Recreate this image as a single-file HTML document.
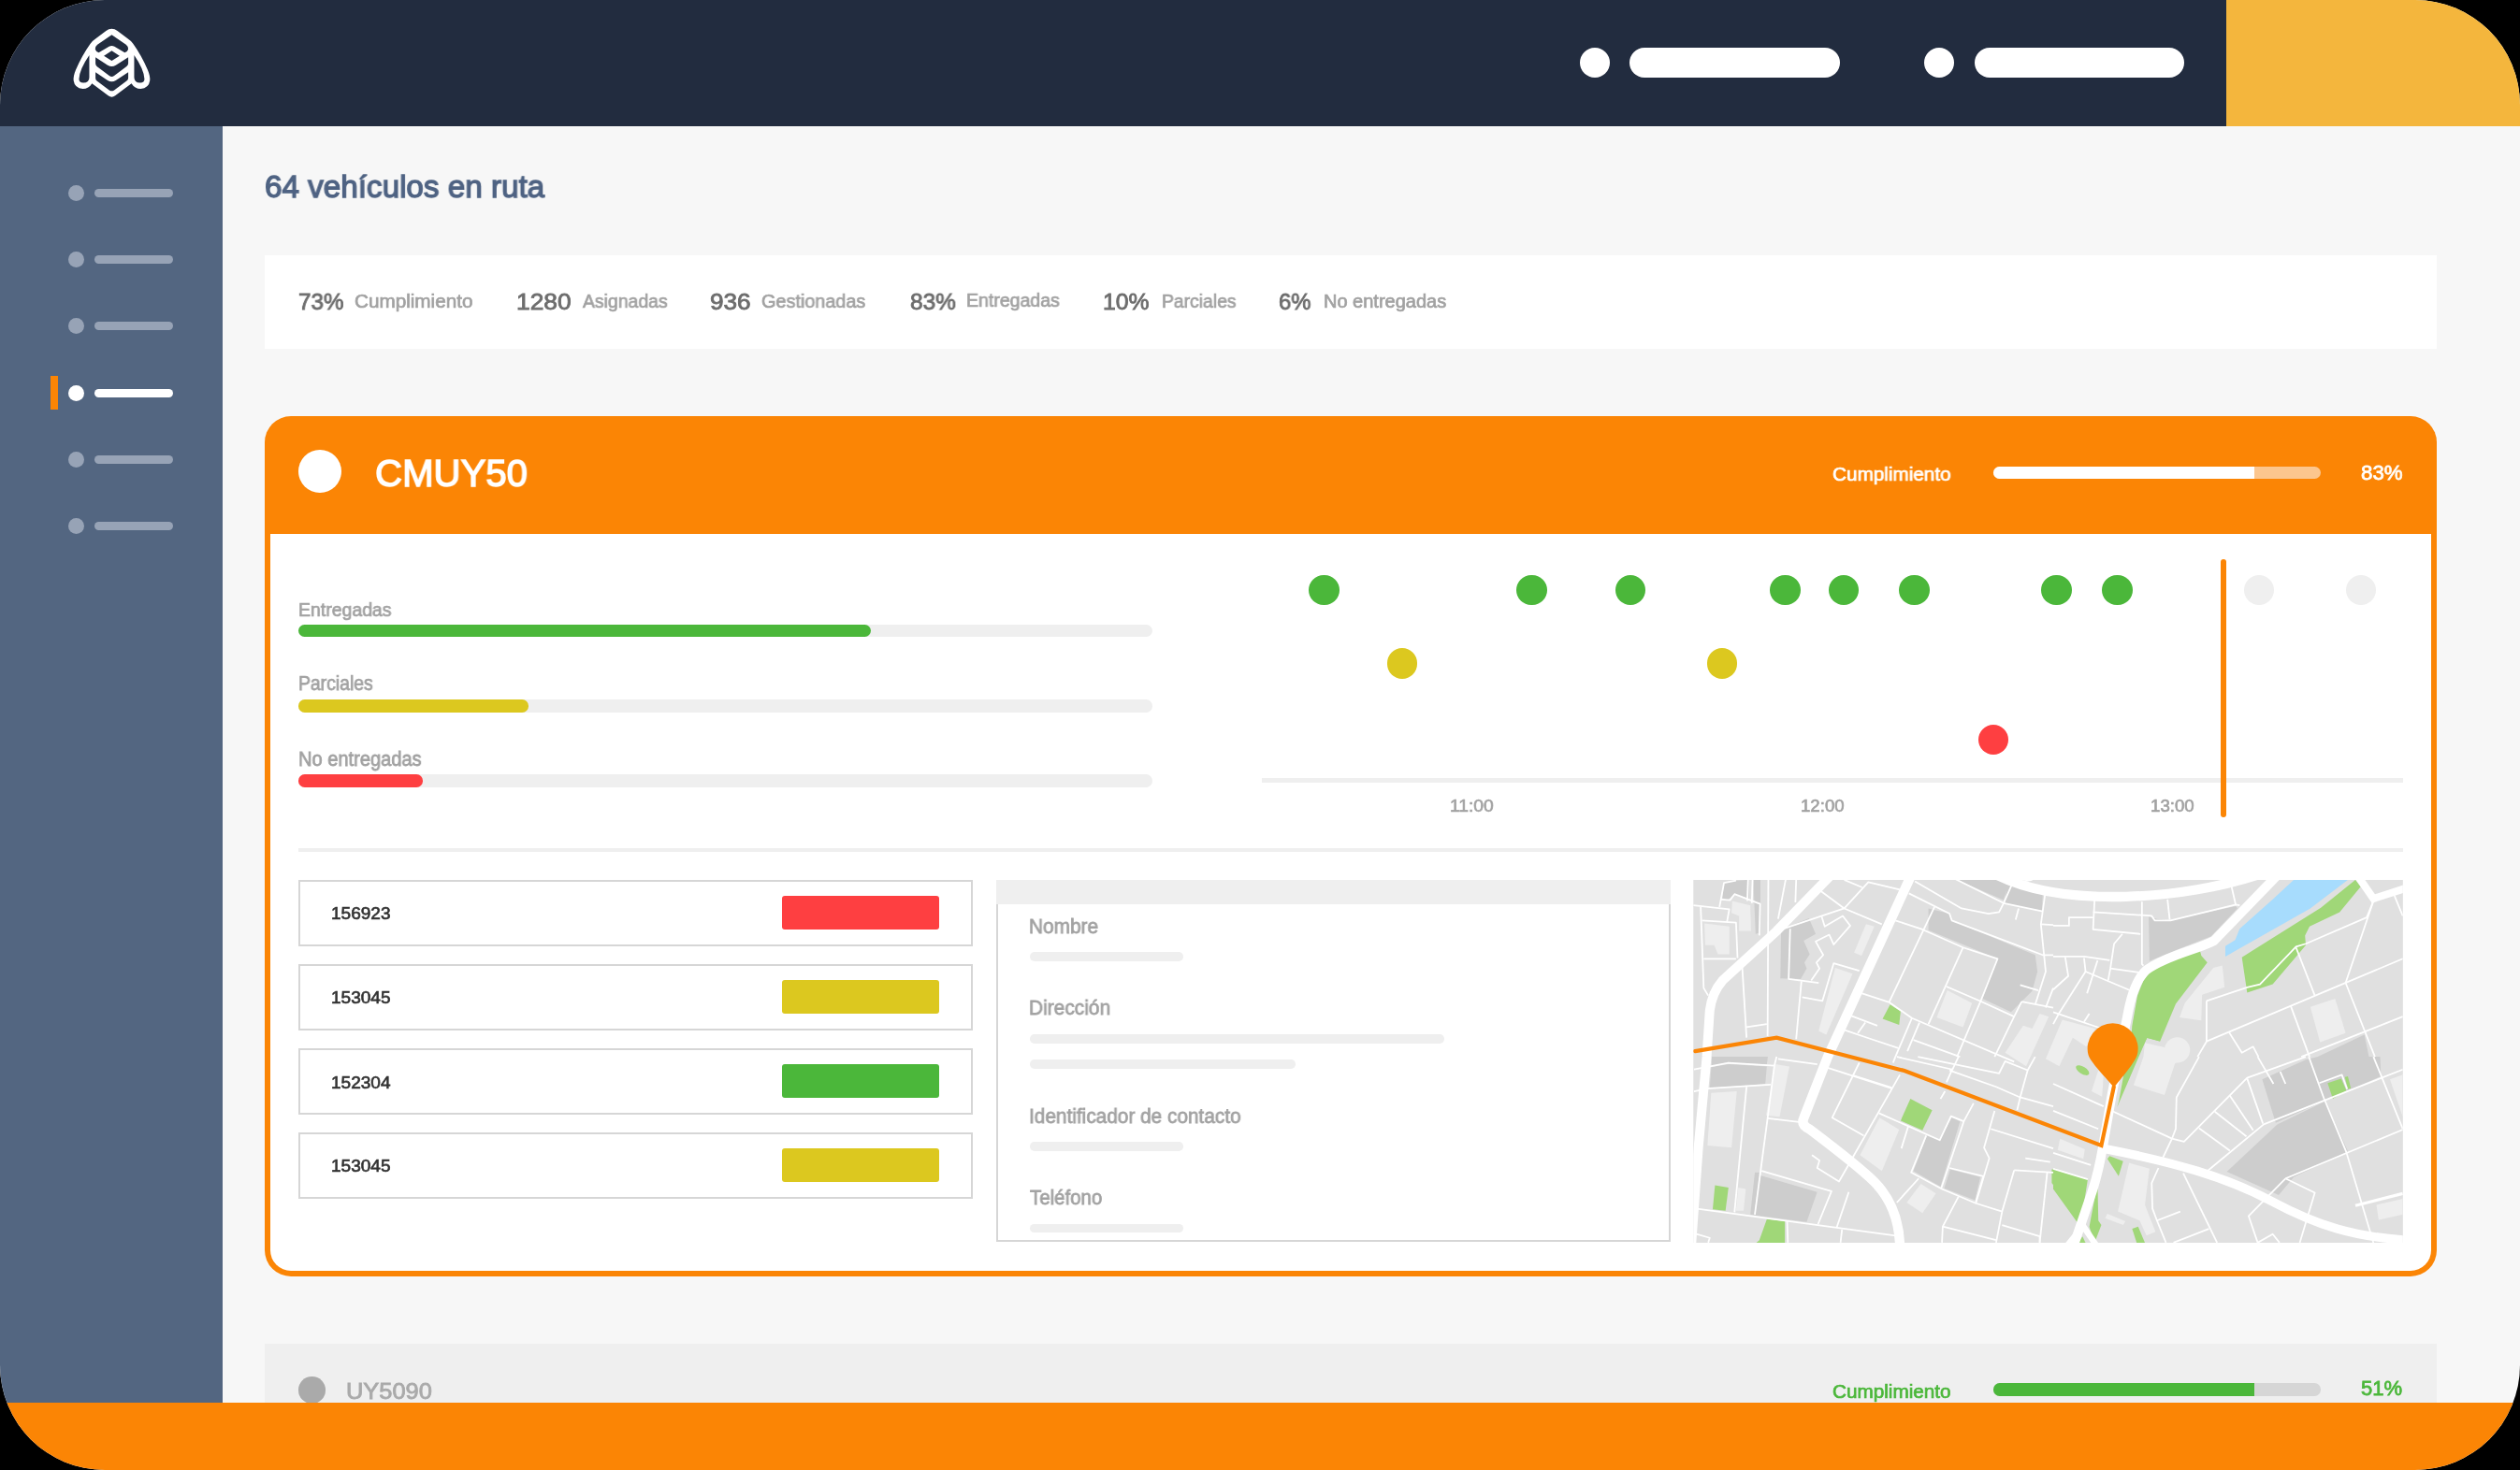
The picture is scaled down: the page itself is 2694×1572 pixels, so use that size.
<!DOCTYPE html>
<html><head><meta charset="utf-8"><style>
html,body{margin:0;padding:0;}
body{width:2694px;height:1572px;background:#000;overflow:hidden;position:relative;}
#f{position:absolute;left:0;top:0;width:2694px;height:1572px;border-radius:112px;overflow:hidden;background:#f7f7f7;}
.b{position:absolute;}
.t{position:absolute;white-space:nowrap;line-height:1;font-family:"Liberation Sans",sans-serif;transform-origin:0 0;will-change:transform;}
svg{position:absolute;}
</style></head><body><div id="f">
<div class="b" style="left:0.00px;top:0.00px;width:2380.00px;height:135.00px;background:#222c3f;"></div>
<div class="b" style="left:2380.00px;top:0.00px;width:314.00px;height:135.00px;background:#f4b63d;"></div>
<div class="b" style="left:1688.50px;top:51.00px;width:32.00px;height:32.00px;background:#fff;border-radius:50%;"></div>
<div class="b" style="left:1742.40px;top:51.00px;width:224.90px;height:32.00px;background:#fff;border-radius:16.00px;"></div>
<div class="b" style="left:2056.50px;top:51.00px;width:32.00px;height:32.00px;background:#fff;border-radius:50%;"></div>
<div class="b" style="left:2111.00px;top:51.00px;width:224.40px;height:32.00px;background:#fff;border-radius:16.00px;"></div>
<svg style="left:70px;top:25px" width="100" height="85.02" viewBox="0 0 1729 1470"><path fill="#fff" fill-rule="evenodd" d="
M855,100 Q800,100 750,140 L560,280 Q500,320 460,375 Q300,600 190,860 Q140,980 150,1060 Q170,1200 320,1210 Q430,1210 490,1110 L790,1335 Q855,1385 920,1335 L1220,1110 Q1280,1210 1390,1210 Q1540,1200 1560,1060 Q1570,980 1520,860 Q1410,600 1250,375 Q1210,320 1150,280 L960,140 Q910,100 855,100 Z
M855,210 L1120,395 Q1165,430 1160,480 Q1150,520 1095,540 L905,430 Q855,400 805,430 L615,540 Q560,520 550,480 Q545,430 590,395 Z
M855,505 L1000,600 L855,690 L710,600 Z
M555,625 L780,775 Q855,820 930,775 L1160,625 L1160,740 Q1160,775 1130,795 L900,970 Q855,1000 810,970 L580,795 Q555,775 555,740 Z
M555,905 L780,1055 Q855,1100 930,1055 L1160,905 L1160,1010 Q1160,1045 1130,1065 L900,1235 Q855,1265 810,1235 L580,1065 Q555,1045 555,1010 Z
M440,590 L440,1000 Q440,1100 330,1100 Q250,1100 250,1030 Q260,850 440,590 Z
M1270,590 L1270,1000 Q1270,1100 1380,1100 Q1460,1100 1460,1030 Q1450,850 1270,590 Z"/></svg>

<div class="b" style="left:0.00px;top:135.00px;width:238.00px;height:1365.00px;background:#536681;"></div>
<div class="b" style="left:73.20px;top:197.50px;width:17.00px;height:17.00px;background:#97a3b6;border-radius:50%;"></div>
<div class="b" style="left:101.00px;top:201.50px;width:83.50px;height:9.00px;background:#97a3b6;border-radius:4.50px;"></div>
<div class="b" style="left:73.20px;top:268.50px;width:17.00px;height:17.00px;background:#97a3b6;border-radius:50%;"></div>
<div class="b" style="left:101.00px;top:272.50px;width:83.50px;height:9.00px;background:#97a3b6;border-radius:4.50px;"></div>
<div class="b" style="left:73.20px;top:340.10px;width:17.00px;height:17.00px;background:#97a3b6;border-radius:50%;"></div>
<div class="b" style="left:101.00px;top:344.10px;width:83.50px;height:9.00px;background:#97a3b6;border-radius:4.50px;"></div>
<div class="b" style="left:73.20px;top:411.50px;width:17.00px;height:17.00px;background:#fff;border-radius:50%;"></div>
<div class="b" style="left:101.00px;top:415.50px;width:83.50px;height:9.00px;background:#fff;border-radius:4.50px;"></div>
<div class="b" style="left:73.20px;top:482.70px;width:17.00px;height:17.00px;background:#97a3b6;border-radius:50%;"></div>
<div class="b" style="left:101.00px;top:486.70px;width:83.50px;height:9.00px;background:#97a3b6;border-radius:4.50px;"></div>
<div class="b" style="left:73.20px;top:554.00px;width:17.00px;height:17.00px;background:#97a3b6;border-radius:50%;"></div>
<div class="b" style="left:101.00px;top:558.00px;width:83.50px;height:9.00px;background:#97a3b6;border-radius:4.50px;"></div>
<div class="b" style="left:53.80px;top:402.20px;width:8.50px;height:35.70px;background:#fb8505;"></div>
<div class="t" style="left:283.40px;top:183.44px;font-size:33.65px;font-weight:normal;color:#4f6383;-webkit-text-stroke:1.35px #4f6383;transform:scaleX(0.9875);">64 vehículos en ruta</div>
<div class="b" style="left:283.00px;top:272.60px;width:2322.40px;height:100.80px;background:#fff;"></div>
<div class="t" style="left:319.21px;top:311.11px;font-size:24.76px;font-weight:normal;color:#6d6d6d;-webkit-text-stroke:0.87px #6d6d6d;transform:scaleX(0.9796);">73%</div>
<div class="t" style="left:379.13px;top:312.02px;font-size:20.00px;font-weight:normal;color:#a2a2a2;-webkit-text-stroke:0.70px #a2a2a2;transform:scaleX(1.0339);">Cumplimiento</div>
<div class="t" style="left:552.19px;top:311.11px;font-size:24.76px;font-weight:normal;color:#6d6d6d;-webkit-text-stroke:0.87px #6d6d6d;transform:scaleX(1.0631);">1280</div>
<div class="t" style="left:622.64px;top:312.02px;font-size:20.00px;font-weight:normal;color:#a2a2a2;-webkit-text-stroke:0.70px #a2a2a2;transform:scaleX(0.9700);">Asignadas</div>
<div class="t" style="left:759.28px;top:311.11px;font-size:24.76px;font-weight:normal;color:#6d6d6d;-webkit-text-stroke:0.87px #6d6d6d;transform:scaleX(1.0578);">936</div>
<div class="t" style="left:813.66px;top:312.02px;font-size:20.00px;font-weight:normal;color:#a2a2a2;-webkit-text-stroke:0.70px #a2a2a2;transform:scaleX(0.9910);">Gestionadas</div>
<div class="t" style="left:972.58px;top:311.11px;font-size:24.76px;font-weight:normal;color:#6d6d6d;-webkit-text-stroke:0.87px #6d6d6d;transform:scaleX(0.9864);">83%</div>
<div class="t" style="left:1032.53px;top:311.32px;font-size:20.00px;font-weight:normal;color:#a2a2a2;-webkit-text-stroke:0.70px #a2a2a2;transform:scaleX(0.9757);">Entregadas</div>
<div class="t" style="left:1179.09px;top:311.11px;font-size:24.76px;font-weight:normal;color:#6d6d6d;-webkit-text-stroke:0.87px #6d6d6d;transform:scaleX(0.9913);">10%</div>
<div class="t" style="left:1241.79px;top:312.02px;font-size:20.00px;font-weight:normal;color:#a2a2a2;-webkit-text-stroke:0.70px #a2a2a2;transform:scaleX(0.9665);">Parciales</div>
<div class="t" style="left:1367.48px;top:311.11px;font-size:24.76px;font-weight:normal;color:#6d6d6d;-webkit-text-stroke:0.87px #6d6d6d;transform:scaleX(0.9626);">6%</div>
<div class="t" style="left:1415.00px;top:312.02px;font-size:20.00px;font-weight:normal;color:#a2a2a2;-webkit-text-stroke:0.70px #a2a2a2;transform:scaleX(0.9992);">No entregadas</div>
<div class="b" style="left:283.00px;top:445.30px;width:2322.00px;height:919.40px;background:#fb8505;border-radius:28px;"></div>
<div class="b" style="left:289.20px;top:571.20px;width:2310.00px;height:787.60px;background:#fff;border-radius:0 0 22px 22px;"></div>
<div class="b" style="left:319.10px;top:481.40px;width:46.00px;height:46.00px;background:#fff;border-radius:50%;"></div>
<div class="t" style="left:400.69px;top:485.50px;font-size:41.38px;font-weight:normal;color:#fff;-webkit-text-stroke:1.45px #fff;transform:scaleX(0.9715);">CMUY50</div>
<div class="t" style="left:1959.23px;top:497.20px;font-size:20.83px;font-weight:normal;color:#fff;-webkit-text-stroke:0.73px #fff;transform:scaleX(0.9944);">Cumplimiento</div>
<div class="b" style="left:2131.00px;top:498.70px;width:350.30px;height:13.50px;background:#fcc68e;border-radius:6.75px;"></div>
<div class="b" style="left:2131.00px;top:498.70px;width:278.80px;height:13.50px;background:#fff;border-radius:6.75px 0 0 6.75px;"></div>
<div class="t" style="left:2523.89px;top:495.12px;font-size:22.31px;font-weight:normal;color:#fff;-webkit-text-stroke:0.78px #fff;transform:scaleX(0.9972);">83%</div>
<div class="t" style="left:318.78px;top:640.97px;font-size:21.10px;font-weight:normal;color:#a2a2a2;-webkit-text-stroke:0.74px #a2a2a2;transform:scaleX(0.9223);">Entregadas</div>
<div class="b" style="left:319.00px;top:667.80px;width:913.00px;height:13.50px;background:#efefef;border-radius:6.75px;"></div>
<div class="b" style="left:319.00px;top:667.80px;width:612.00px;height:13.50px;background:#4bb73a;border-radius:6.75px;"></div>
<div class="t" style="left:318.79px;top:721.41px;font-size:21.52px;font-weight:normal;color:#a2a2a2;-webkit-text-stroke:0.75px #a2a2a2;transform:scaleX(0.9007);">Parciales</div>
<div class="b" style="left:319.00px;top:748.00px;width:913.00px;height:13.50px;background:#efefef;border-radius:6.75px;"></div>
<div class="b" style="left:319.00px;top:748.00px;width:246.00px;height:13.50px;background:#dcc81f;border-radius:6.75px;"></div>
<div class="t" style="left:318.75px;top:800.77px;font-size:22.48px;font-weight:normal;color:#a2a2a2;-webkit-text-stroke:0.79px #a2a2a2;transform:scaleX(0.8923);">No entregadas</div>
<div class="b" style="left:319.00px;top:828.00px;width:913.00px;height:13.50px;background:#efefef;border-radius:6.75px;"></div>
<div class="b" style="left:319.00px;top:828.00px;width:132.50px;height:13.50px;background:#fe3f41;border-radius:6.75px;"></div>
<div class="b" style="left:1349.20px;top:832.20px;width:1219.60px;height:4.60px;background:#efefef;"></div>
<div class="t" style="left:1550.29px;top:853.25px;font-size:18.23px;font-weight:normal;color:#a2a2a2;-webkit-text-stroke:0.64px #a2a2a2;transform:scaleX(1.0573);">11:00</div>
<div class="t" style="left:1924.53px;top:853.25px;font-size:18.23px;font-weight:normal;color:#a2a2a2;-webkit-text-stroke:0.64px #a2a2a2;transform:scaleX(1.0224);">12:00</div>
<div class="t" style="left:2298.63px;top:853.25px;font-size:18.23px;font-weight:normal;color:#a2a2a2;-webkit-text-stroke:0.64px #a2a2a2;transform:scaleX(1.0246);">13:00</div>
<div class="b" style="left:1399.05px;top:614.75px;width:32.50px;height:32.50px;background:#4bb73a;border-radius:50%;"></div>
<div class="b" style="left:1621.25px;top:614.75px;width:32.50px;height:32.50px;background:#4bb73a;border-radius:50%;"></div>
<div class="b" style="left:1726.75px;top:614.75px;width:32.50px;height:32.50px;background:#4bb73a;border-radius:50%;"></div>
<div class="b" style="left:1892.35px;top:614.75px;width:32.50px;height:32.50px;background:#4bb73a;border-radius:50%;"></div>
<div class="b" style="left:1954.55px;top:614.75px;width:32.50px;height:32.50px;background:#4bb73a;border-radius:50%;"></div>
<div class="b" style="left:2030.45px;top:614.75px;width:32.50px;height:32.50px;background:#4bb73a;border-radius:50%;"></div>
<div class="b" style="left:2182.05px;top:614.75px;width:32.50px;height:32.50px;background:#4bb73a;border-radius:50%;"></div>
<div class="b" style="left:2247.25px;top:614.75px;width:32.50px;height:32.50px;background:#4bb73a;border-radius:50%;"></div>
<div class="b" style="left:1482.95px;top:693.45px;width:32.50px;height:32.50px;background:#dcc81f;border-radius:50%;"></div>
<div class="b" style="left:1824.55px;top:693.45px;width:32.50px;height:32.50px;background:#dcc81f;border-radius:50%;"></div>
<div class="b" style="left:2114.55px;top:774.75px;width:32.50px;height:32.50px;background:#fe3f41;border-radius:50%;"></div>
<div class="b" style="left:2398.95px;top:614.75px;width:32.50px;height:32.50px;background:#efefef;border-radius:50%;"></div>
<div class="b" style="left:2507.55px;top:614.75px;width:32.50px;height:32.50px;background:#efefef;border-radius:50%;"></div>
<div class="b" style="left:2373.50px;top:598.00px;width:6.60px;height:276.00px;background:#fb8505;border-radius:138.00px;"></div>
<div class="b" style="left:319.00px;top:907.00px;width:2250.00px;height:4.30px;background:#efefef;"></div>
<div class="b" style="left:319.00px;top:940.80px;width:720.70px;height:71.40px;background:#fff;box-sizing:border-box;border:2px solid #d6d6d6;"></div>
<div class="b" style="left:835.90px;top:958.30px;width:168.20px;height:35.80px;background:#fe3f41;border-radius:3px;"></div>
<div class="t" style="left:354.11px;top:967.14px;font-size:19.05px;font-weight:normal;color:#333;-webkit-text-stroke:0.67px #333;transform:scaleX(0.9984);">156923</div>
<div class="b" style="left:319.00px;top:1030.60px;width:720.70px;height:71.40px;background:#fff;box-sizing:border-box;border:2px solid #d6d6d6;"></div>
<div class="b" style="left:835.90px;top:1048.10px;width:168.20px;height:35.80px;background:#dcc81f;border-radius:3px;"></div>
<div class="t" style="left:354.11px;top:1056.74px;font-size:19.05px;font-weight:normal;color:#333;-webkit-text-stroke:0.67px #333;transform:scaleX(0.9984);">153045</div>
<div class="b" style="left:319.00px;top:1120.50px;width:720.70px;height:71.40px;background:#fff;box-sizing:border-box;border:2px solid #d6d6d6;"></div>
<div class="b" style="left:835.90px;top:1138.00px;width:168.20px;height:35.80px;background:#4bb73a;border-radius:3px;"></div>
<div class="t" style="left:354.11px;top:1147.54px;font-size:19.05px;font-weight:normal;color:#333;-webkit-text-stroke:0.67px #333;transform:scaleX(0.9953);">152304</div>
<div class="b" style="left:319.00px;top:1210.60px;width:720.70px;height:71.40px;background:#fff;box-sizing:border-box;border:2px solid #d6d6d6;"></div>
<div class="b" style="left:835.90px;top:1228.10px;width:168.20px;height:35.80px;background:#dcc81f;border-radius:3px;"></div>
<div class="t" style="left:354.11px;top:1236.74px;font-size:19.05px;font-weight:normal;color:#333;-webkit-text-stroke:0.67px #333;transform:scaleX(0.9984);">153045</div>
<div class="b" style="left:1065.20px;top:940.50px;width:720.50px;height:387.50px;background:#fff;box-sizing:border-box;border:2px solid #d6d6d6;"></div>
<div class="b" style="left:1065.20px;top:940.50px;width:720.50px;height:26.20px;background:#efefef;"></div>
<div class="t" style="left:1099.90px;top:980.07px;font-size:21.79px;font-weight:normal;color:#a2a2a2;-webkit-text-stroke:0.76px #a2a2a2;transform:scaleX(0.9574);">Nombre</div>
<div class="t" style="left:1099.89px;top:1066.67px;font-size:21.79px;font-weight:normal;color:#a2a2a2;-webkit-text-stroke:0.76px #a2a2a2;transform:scaleX(0.9596);">Dirección</div>
<div class="t" style="left:1099.69px;top:1183.27px;font-size:21.79px;font-weight:normal;color:#a2a2a2;-webkit-text-stroke:0.76px #a2a2a2;transform:scaleX(0.9547);">Identificador de contacto</div>
<div class="t" style="left:1101.15px;top:1269.67px;font-size:21.79px;font-weight:normal;color:#a2a2a2;-webkit-text-stroke:0.76px #a2a2a2;transform:scaleX(0.9385);">Teléfono</div>
<div class="b" style="left:1101.20px;top:1018.20px;width:163.40px;height:9.80px;background:#efefef;border-radius:4.90px;"></div>
<div class="b" style="left:1101.20px;top:1106.00px;width:443.10px;height:9.50px;background:#efefef;border-radius:4.75px;"></div>
<div class="b" style="left:1101.20px;top:1133.40px;width:283.90px;height:9.60px;background:#efefef;border-radius:4.80px;"></div>
<div class="b" style="left:1101.20px;top:1221.20px;width:163.40px;height:9.50px;background:#efefef;border-radius:4.75px;"></div>
<div class="b" style="left:1101.20px;top:1308.70px;width:163.40px;height:9.50px;background:#efefef;border-radius:4.75px;"></div>
<svg style="left:1790px;top:920px" width="810" height="420" viewBox="0 0 5040 2613"><defs><clipPath id="mc"><rect x="126" y="130" width="4720" height="2414"/></clipPath></defs><g clip-path="url(#mc)"><rect x="0" y="0" width="5040" height="2613" fill="#e0e0e0"/><polygon points="200,420 365,440 365,625 290,625 265,565 205,565" fill="#eeeeee"/><polygon points="385,270 505,300 510,470 430,470 430,370 380,350" fill="#eeeeee"/><polygon points="1195,615 1275,425 1330,440 1245,635" fill="#eeeeee"/><polygon points="960,1135 1070,715 1185,755 1010,1160" fill="#eeeeee"/><polygon points="1745,1045 1815,865 1980,950 1920,1110" fill="#eeeeee"/><polygon points="3360,1045 3395,950 3585,715 3645,700 3660,845 3510,895 3505,1065" fill="#eeeeee"/><polygon points="4230,975 4395,920 4465,1150 4295,1210" fill="#eeeeee"/><polygon points="3055,1497 3120,1307 3400,1307 3330,1352 3260,1562" fill="#eeeeee"/><polygon points="3130,1215 3260,1245 3280,1307 3120,1307" fill="#eeeeee"/><polygon points="2775,1537 2820,1397 2855,1417 2845,1572" fill="#eeeeee"/><polygon points="2550,1927 2565,1852 2730,1922 2720,1987" fill="#eeeeee"/><polygon points="2950,2337 3025,2012 3160,2052 3130,2292 3200,2472 3140,2497 3095,2397" fill="#eeeeee"/><polygon points="2865,2382 2880,2352 3000,2402 2985,2427" fill="#eeeeee"/><polygon points="4670,2292 4845,2252 4845,2357 4685,2392" fill="#eeeeee"/><polygon points="4760,1457 4845,1427 4845,1707" fill="#eeeeee"/><polygon points="2200,1280 2320,1100 2380,1120 2430,1020 2490,1040 2340,1370" fill="#eeeeee"/><polygon points="2470,1320 2580,1060 2800,1120 2740,1240 2650,1180 2560,1370" fill="#eeeeee"/><polygon points="220,1897 245,1547 415,1537 380,1912" fill="#eeeeee"/><polygon points="610,1697 670,1357 765,1372 700,1707" fill="#eeeeee"/><polygon points="1235,1962 1365,1712 1495,1792 1380,2067" fill="#eeeeee"/><polygon points="1545,2277 1640,2152 1740,2217 1650,2347" fill="#eeeeee"/><polygon points="410,2332 425,2177 475,2187 460,2332" fill="#eeeeee"/><circle cx="3345" cy="1262" r="85" fill="#eeeeee"/><polygon points="330,150 410,135 495,130 495,255 400,225 355,262 320,252" fill="#cdcdcd"/><polygon points="525,130 572,130 572,480 540,490" fill="#cdcdcd"/><polygon points="710,460 895,385 940,490 860,535 900,625 865,680 880,720 840,790 705,785" fill="#cdcdcd"/><polygon points="1690,320 1830,355 1845,400 2400,630 2415,740 2380,870 2240,1010 2050,920 2150,655 1690,465" fill="#cdcdcd"/><polygon points="1880,130 2230,130 2190,265" fill="#cdcdcd"/><polygon points="2210,165 2450,220 2445,335 2200,290" fill="#cdcdcd"/><polygon points="3155,375 3210,390 3300,400 3735,305 3745,320 3570,505 3380,580 3160,670" fill="#cdcdcd"/><polygon points="250,1307 620,1307 615,1357 360,1347 250,1367" fill="#cdcdcd"/><polygon points="250,1307 620,1307 615,1357 360,1347 250,1367" fill="#cdcdcd"/><polygon points="245,1377 360,1357 615,1372 605,1487 235,1517" fill="#cdcdcd"/><polygon points="540,2087 950,2207 880,2407 540,2362" fill="#cdcdcd"/><polygon points="505,2357 535,2077 565,2077 545,2362" fill="#cdcdcd"/><polygon points="1590,2067 1680,1832 1765,1862 1845,1712 1900,1737 1770,2172" fill="#cdcdcd"/><polygon points="1795,2182 1835,2057 2035,2107 2000,2262" fill="#cdcdcd"/><polygon points="3910,1457 4200,1327 4280,1307 4695,1307 4700,1437 4330,1597 4000,1747" fill="#cdcdcd"/><polygon points="4280,1307 4590,1160 4620,1307" fill="#cdcdcd"/><polygon points="3675,2072 4010,1757 4330,1602 4480,1937 4120,2107 4020,2227" fill="#cdcdcd"/><polygon points="1385,1055 1435,960 1505,1005 1495,1095" fill="#a0d778"/><polygon points="4530,130 4565,175 4425,345 4225,440 4195,500 4200,565 3980,825 3810,880 3775,645 4300,315" fill="#a0d778"/><polygon points="3495,595 3505,635 3545,680 3335,955 3230,1205 3145,1180 3080,1307 3040,1307 3045,1100 3080,900 3120,800 3180,720 3320,660" fill="#a0d778"/><polygon points="2520,2057 2750,2122 2700,2437 2520,2187" fill="#a0d778"/><polygon points="2880,1987 2895,1967 2985,2002 2955,2102" fill="#a0d778"/><polygon points="2815,2147 2820,2397 2840,2427 2795,2544 2760,2437" fill="#a0d778"/><polygon points="2685,2544 2715,2502 2735,2544" fill="#a0d778"/><polygon points="3045,2452 3085,2437 3130,2544 3075,2544" fill="#a0d778"/><polygon points="4345,1482 4435,1452 4470,1532 4380,1587" fill="#a0d778"/><polygon points="4460,1442 4480,1437 4500,1517 4480,1522" fill="#a0d778"/><polygon points="255,2322 270,2162 360,2177 340,2332" fill="#a0d778"/><polygon points="545,2544 565,2527 615,2387 735,2402 735,2544" fill="#a0d778"/><polygon points="1505,1732 1570,1587 1715,1662 1650,1797" fill="#a0d778"/><polygon points="2510,2057 2540,2052 2540,2187 2510,2147" fill="#a0d778"/><polygon points="3067,996 3298,996 3228,1203 3143,1182 2945,1642 2957,1600" fill="#a0d778"/><ellipse cx="2715" cy="1397" rx="50" ry="24" transform="rotate(32 2715 1397)" fill="#a0d778"/><polygon points="4120,130 4480,130 4230,320 3665,640 3665,570 3730,530 3760,455 3980,260" fill="#a7dcfd"/><polyline points="126,300 365,325 350,410" fill="none" stroke="#fff" stroke-width="11" stroke-linejoin="round"/><polyline points="175,310 195,850 225,900" fill="none" stroke="#fff" stroke-width="11" stroke-linejoin="round"/><polyline points="185,400 410,415 420,650" fill="none" stroke="#fff" stroke-width="11" stroke-linejoin="round"/><polyline points="195,655 410,655" fill="none" stroke="#fff" stroke-width="11" stroke-linejoin="round"/><polyline points="300,310 330,150 410,135" fill="none" stroke="#fff" stroke-width="11" stroke-linejoin="round"/><polyline points="310,260 370,265 400,225 570,290 565,500" fill="none" stroke="#fff" stroke-width="11" stroke-linejoin="round"/><polyline points="490,130 485,270" fill="none" stroke="#fff" stroke-width="11" stroke-linejoin="round"/><polyline points="520,130 515,285" fill="none" stroke="#fff" stroke-width="11" stroke-linejoin="round"/><polyline points="625,130 620,1170" fill="none" stroke="#fff" stroke-width="11" stroke-linejoin="round"/><polyline points="740,130 690,390" fill="none" stroke="#fff" stroke-width="11" stroke-linejoin="round"/><polyline points="810,130 805,280" fill="none" stroke="#fff" stroke-width="11" stroke-linejoin="round"/><polyline points="450,690 480,1180" fill="none" stroke="#fff" stroke-width="11" stroke-linejoin="round"/><polyline points="480,1110 615,1090" fill="none" stroke="#fff" stroke-width="11" stroke-linejoin="round"/><polyline points="680,470 1130,320" fill="none" stroke="#fff" stroke-width="11" stroke-linejoin="round"/><polyline points="975,205 1130,320 1380,425" fill="none" stroke="#fff" stroke-width="11" stroke-linejoin="round"/><polyline points="1130,320 1290,145 1500,195" fill="none" stroke="#fff" stroke-width="11" stroke-linejoin="round"/><polyline points="1130,130 1250,180" fill="none" stroke="#fff" stroke-width="11" stroke-linejoin="round"/><polyline points="770,455 760,790 960,815" fill="none" stroke="#fff" stroke-width="11" stroke-linejoin="round"/><polyline points="845,805 810,1190" fill="none" stroke="#fff" stroke-width="11" stroke-linejoin="round"/><polyline points="850,910 985,935 1060,685 1230,735" fill="none" stroke="#fff" stroke-width="11" stroke-linejoin="round"/><polyline points="980,375 1000,440 1120,370 1170,435 1060,560 1030,495 940,540 990,630 945,680 965,720 910,800" fill="none" stroke="#fff" stroke-width="11" stroke-linejoin="round"/><polyline points="1600,140 1910,320 2090,355 2160,345 2190,285 2250,150" fill="none" stroke="#fff" stroke-width="11" stroke-linejoin="round"/><polyline points="1560,220 1830,355 1845,400 2450,630 2520,630" fill="none" stroke="#fff" stroke-width="11" stroke-linejoin="round"/><polyline points="1470,400 1650,460 1920,580 2150,655 2040,930 1880,1307" fill="none" stroke="#fff" stroke-width="11" stroke-linejoin="round"/><polyline points="1730,310 1430,940" fill="none" stroke="#fff" stroke-width="11" stroke-linejoin="round"/><polyline points="1230,880 1430,945 1580,1050 2260,1340" fill="none" stroke="#fff" stroke-width="11" stroke-linejoin="round"/><polyline points="1810,840 2030,935 2260,1040" fill="none" stroke="#fff" stroke-width="11" stroke-linejoin="round"/><polyline points="1920,580 1690,1090" fill="none" stroke="#fff" stroke-width="11" stroke-linejoin="round"/><polyline points="2466,224 2438,425 2470,740 2400,960" fill="none" stroke="#fff" stroke-width="11" stroke-linejoin="round"/><polyline points="2438,425 2520,430" fill="none" stroke="#fff" stroke-width="11" stroke-linejoin="round"/><polyline points="2300,830 2420,865" fill="none" stroke="#fff" stroke-width="11" stroke-linejoin="round"/><polyline points="1165,1030 1350,1100" fill="none" stroke="#fff" stroke-width="11" stroke-linejoin="round"/><polyline points="1120,1125 1310,1190 1490,1250" fill="none" stroke="#fff" stroke-width="11" stroke-linejoin="round"/><polyline points="1270,1080 1220,1150" fill="none" stroke="#fff" stroke-width="11" stroke-linejoin="round"/><polyline points="1580,1050 1470,1307" fill="none" stroke="#fff" stroke-width="11" stroke-linejoin="round"/><polyline points="1630,1080 1550,1270" fill="none" stroke="#fff" stroke-width="11" stroke-linejoin="round"/><polyline points="1590,1195 1900,1307" fill="none" stroke="#fff" stroke-width="11" stroke-linejoin="round"/><polyline points="2310,940 2260,1040 2130,1307" fill="none" stroke="#fff" stroke-width="11" stroke-linejoin="round"/><polyline points="2310,940 2520,980" fill="none" stroke="#fff" stroke-width="11" stroke-linejoin="round"/><polyline points="2520,850 2470,980" fill="none" stroke="#fff" stroke-width="11" stroke-linejoin="round"/><polyline points="1860,120 2190,285" fill="none" stroke="#fff" stroke-width="11" stroke-linejoin="round"/><polyline points="2190,285 2450,340" fill="none" stroke="#fff" stroke-width="11" stroke-linejoin="round"/><polyline points="2290,320 2270,395" fill="none" stroke="#fff" stroke-width="11" stroke-linejoin="round"/><polyline points="2250,150 2380,130" fill="none" stroke="#fff" stroke-width="11" stroke-linejoin="round"/><polyline points="2520,435 2625,435 2625,380 2785,380" fill="none" stroke="#fff" stroke-width="11" stroke-linejoin="round"/><polyline points="2795,265 2785,460 3100,490" fill="none" stroke="#fff" stroke-width="11" stroke-linejoin="round"/><polyline points="2785,345 3110,365 3175,370 3195,400 3300,400 3735,295 3760,300" fill="none" stroke="#fff" stroke-width="11" stroke-linejoin="round"/><polyline points="3110,275 3110,690 3120,700" fill="none" stroke="#fff" stroke-width="11" stroke-linejoin="round"/><polyline points="3280,260 3295,395" fill="none" stroke="#fff" stroke-width="11" stroke-linejoin="round"/><polyline points="3705,170 3735,300" fill="none" stroke="#fff" stroke-width="11" stroke-linejoin="round"/><polyline points="2980,490 2925,555 2900,720 2885,800" fill="none" stroke="#fff" stroke-width="11" stroke-linejoin="round"/><polyline points="2520,640 2725,640 2895,665" fill="none" stroke="#fff" stroke-width="11" stroke-linejoin="round"/><polyline points="2600,645 2620,770 2520,860" fill="none" stroke="#fff" stroke-width="11" stroke-linejoin="round"/><polyline points="2725,650 2735,740 3030,865" fill="none" stroke="#fff" stroke-width="11" stroke-linejoin="round"/><polyline points="2735,740 2560,1015 2520,1090" fill="none" stroke="#fff" stroke-width="11" stroke-linejoin="round"/><polyline points="2815,665 2745,885" fill="none" stroke="#fff" stroke-width="11" stroke-linejoin="round"/><polyline points="2900,720 3090,745" fill="none" stroke="#fff" stroke-width="11" stroke-linejoin="round"/><polyline points="2520,1010 2830,1115" fill="none" stroke="#fff" stroke-width="11" stroke-linejoin="round"/><polyline points="2760,1020 2725,1075" fill="none" stroke="#fff" stroke-width="11" stroke-linejoin="round"/><polyline points="3540,935 3810,845 3895,825 4135,575 4200,555 4605,380 4650,270" fill="none" stroke="#fff" stroke-width="11" stroke-linejoin="round"/><polyline points="3540,935 3540,1205 3480,1307" fill="none" stroke="#fff" stroke-width="11" stroke-linejoin="round"/><polyline points="4135,580 4260,900" fill="none" stroke="#fff" stroke-width="11" stroke-linejoin="round"/><polyline points="3540,1205 4845,655" fill="none" stroke="#fff" stroke-width="11" stroke-linejoin="round"/><polyline points="4650,270 4465,815 4660,1307" fill="none" stroke="#fff" stroke-width="11" stroke-linejoin="round"/><polyline points="4790,235 4845,370" fill="none" stroke="#fff" stroke-width="11" stroke-linejoin="round"/><polyline points="3690,1145 3775,1280 3850,1240 3885,1307" fill="none" stroke="#fff" stroke-width="11" stroke-linejoin="round"/><polyline points="4100,970 4225,1307" fill="none" stroke="#fff" stroke-width="11" stroke-linejoin="round"/><polyline points="4170,1307 4845,1040" fill="none" stroke="#fff" stroke-width="11" stroke-linejoin="round"/><polyline points="130,1392 360,1347 665,1367 680,1307" fill="none" stroke="#fff" stroke-width="11" stroke-linejoin="round"/><polyline points="690,1322 950,1357" fill="none" stroke="#fff" stroke-width="11" stroke-linejoin="round"/><polyline points="130,1537 235,1517 640,1492" fill="none" stroke="#fff" stroke-width="11" stroke-linejoin="round"/><polyline points="480,1507 400,2342" fill="none" stroke="#fff" stroke-width="11" stroke-linejoin="round"/><polyline points="665,1367 620,1717 830,1742" fill="none" stroke="#fff" stroke-width="11" stroke-linejoin="round"/><polyline points="620,1717 535,2357" fill="none" stroke="#fff" stroke-width="11" stroke-linejoin="round"/><polyline points="580,2067 1045,2202 955,2422" fill="none" stroke="#fff" stroke-width="11" stroke-linejoin="round"/><polyline points="140,2317 1470,2497" fill="none" stroke="#fff" stroke-width="11" stroke-linejoin="round"/><polyline points="1160,2207 1080,2442" fill="none" stroke="#fff" stroke-width="11" stroke-linejoin="round"/><polyline points="1115,2457 1105,2544" fill="none" stroke="#fff" stroke-width="11" stroke-linejoin="round"/><polyline points="750,2402 755,2544" fill="none" stroke="#fff" stroke-width="11" stroke-linejoin="round"/><polyline points="130,2482 235,2512 225,2544" fill="none" stroke="#fff" stroke-width="11" stroke-linejoin="round"/><polyline points="1010,1377 1445,1517" fill="none" stroke="#fff" stroke-width="11" stroke-linejoin="round"/><polyline points="1230,1347 1050,1712 1260,1832" fill="none" stroke="#fff" stroke-width="11" stroke-linejoin="round"/><polyline points="1500,1427 1095,2137 950,2047 965,1997 915,1962" fill="none" stroke="#fff" stroke-width="11" stroke-linejoin="round"/><polyline points="1360,1682 1765,1862 1840,1702 1925,1737" fill="none" stroke="#fff" stroke-width="11" stroke-linejoin="round"/><polyline points="1555,1772 1510,1917" fill="none" stroke="#fff" stroke-width="11" stroke-linejoin="round"/><polyline points="1675,1832 1575,2077 1780,2187 2005,2282 2180,2337 2140,2544" fill="none" stroke="#fff" stroke-width="11" stroke-linejoin="round"/><polyline points="1625,2117 1480,2277" fill="none" stroke="#fff" stroke-width="11" stroke-linejoin="round"/><polyline points="1890,2237 1785,2437 1780,2544" fill="none" stroke="#fff" stroke-width="11" stroke-linejoin="round"/><polyline points="1785,2437 2140,2527" fill="none" stroke="#fff" stroke-width="11" stroke-linejoin="round"/><polyline points="1990,1617 1925,1737 1775,2182" fill="none" stroke="#fff" stroke-width="11" stroke-linejoin="round"/><polyline points="1830,2047 2055,2102 2005,2272" fill="none" stroke="#fff" stroke-width="11" stroke-linejoin="round"/><polyline points="2130,1667 2060,1912 2095,1982 2005,2282" fill="none" stroke="#fff" stroke-width="11" stroke-linejoin="round"/><polyline points="2105,1787 2520,1917" fill="none" stroke="#fff" stroke-width="11" stroke-linejoin="round"/><polyline points="2260,2062 2520,2077" fill="none" stroke="#fff" stroke-width="11" stroke-linejoin="round"/><polyline points="2260,2062 2180,2337" fill="none" stroke="#fff" stroke-width="11" stroke-linejoin="round"/><polyline points="2180,2427 2430,2502 2430,2544" fill="none" stroke="#fff" stroke-width="11" stroke-linejoin="round"/><polyline points="2480,2077 2430,2544" fill="none" stroke="#fff" stroke-width="11" stroke-linejoin="round"/><polyline points="2335,1982 2500,2007" fill="none" stroke="#fff" stroke-width="11" stroke-linejoin="round"/><polyline points="1455,1347 1470,1307" fill="none" stroke="#fff" stroke-width="11" stroke-linejoin="round"/><polyline points="1480,1307 1850,1392 1890,1307" fill="none" stroke="#fff" stroke-width="11" stroke-linejoin="round"/><polyline points="1620,1307 2160,1417 2200,1337 2350,1397 2400,1307" fill="none" stroke="#fff" stroke-width="11" stroke-linejoin="round"/><polyline points="1810,1477 1850,1387" fill="none" stroke="#fff" stroke-width="11" stroke-linejoin="round"/><polyline points="1190,1432 1445,1512" fill="none" stroke="#fff" stroke-width="11" stroke-linejoin="round"/><polyline points="1830,1397 2140,1507 2300,1577 2520,1637" fill="none" stroke="#fff" stroke-width="11" stroke-linejoin="round"/><polyline points="2350,1397 2300,1577 2280,1662" fill="none" stroke="#fff" stroke-width="11" stroke-linejoin="round"/><polyline points="1770,1587 1800,1537" fill="none" stroke="#fff" stroke-width="11" stroke-linejoin="round"/><polyline points="2520,1487 2855,1637" fill="none" stroke="#fff" stroke-width="11" stroke-linejoin="round"/><polyline points="2520,1667 2820,1787" fill="none" stroke="#fff" stroke-width="11" stroke-linejoin="round"/><polyline points="2520,1947 2770,2027" fill="none" stroke="#fff" stroke-width="11" stroke-linejoin="round"/><polyline points="2520,2052 2750,2122" fill="none" stroke="#fff" stroke-width="11" stroke-linejoin="round"/><polyline points="2910,1667 3310,1852 3390,1872 3810,1447 4200,1307" fill="none" stroke="#fff" stroke-width="11" stroke-linejoin="round"/><polyline points="3310,1852 3335,1787 3340,1577 3490,1307" fill="none" stroke="#fff" stroke-width="11" stroke-linejoin="round"/><polyline points="3250,1977 3310,1852" fill="none" stroke="#fff" stroke-width="11" stroke-linejoin="round"/><polyline points="3880,1307 3985,1487" fill="none" stroke="#fff" stroke-width="11" stroke-linejoin="round"/><polyline points="4030,1407 4065,1487" fill="none" stroke="#fff" stroke-width="11" stroke-linejoin="round"/><polyline points="3810,1452 3915,1752" fill="none" stroke="#fff" stroke-width="11" stroke-linejoin="round"/><polyline points="3695,1567 3850,1797" fill="none" stroke="#fff" stroke-width="11" stroke-linejoin="round"/><polyline points="3595,1672 3805,1837" fill="none" stroke="#fff" stroke-width="11" stroke-linejoin="round"/><polyline points="3490,1782 3695,1932" fill="none" stroke="#fff" stroke-width="11" stroke-linejoin="round"/><polyline points="3540,2072 3920,1757 4845,1392" fill="none" stroke="#fff" stroke-width="11" stroke-linejoin="round"/><polyline points="4220,1307 4320,1582 4470,1942 4650,2544" fill="none" stroke="#fff" stroke-width="11" stroke-linejoin="round"/><polyline points="4290,1482 4440,1427 4475,1522" fill="none" stroke="#fff" stroke-width="11" stroke-linejoin="round"/><polyline points="4650,1307 4845,1787" fill="none" stroke="#fff" stroke-width="11" stroke-linejoin="round"/><polyline points="4065,2117 4845,1792" fill="none" stroke="#fff" stroke-width="11" stroke-linejoin="round"/><polyline points="4065,2117 4260,2212 4160,2544" fill="none" stroke="#fff" stroke-width="11" stroke-linejoin="round"/><polyline points="4065,2117 3820,2367 3880,2544" fill="none" stroke="#fff" stroke-width="11" stroke-linejoin="round"/><polyline points="3880,2544 3980,2487 4025,2544" fill="none" stroke="#fff" stroke-width="11" stroke-linejoin="round"/><polyline points="3220,2047 3175,2147 3180,2317 3210,2397 3270,2544" fill="none" stroke="#fff" stroke-width="11" stroke-linejoin="round"/><polyline points="3210,2397 3365,2337" fill="none" stroke="#fff" stroke-width="11" stroke-linejoin="round"/><polyline points="3385,2082 3610,2544" fill="none" stroke="#fff" stroke-width="11" stroke-linejoin="round"/><polyline points="3320,2544 3555,2452" fill="none" stroke="#fff" stroke-width="11" stroke-linejoin="round"/><polyline points="4530,2297 4845,2217" fill="none" stroke="#fff" stroke-width="20" stroke-linejoin="round"/><g transform="translate(0,0)"><path d="M1040,100 L680,470 L320,800 Q250,880 235,1000 L215,1307 L160,1907 L110,2600" fill="none" stroke="#fff" stroke-width="62" stroke-linecap="butt"/></g><g transform="translate(0,0)"><path d="M1575,100 L1020,1307 L860,1717 Q840,1760 900,1790 Q1230,2040 1330,2140 Q1490,2300 1500,2560" fill="none" stroke="#fff" stroke-width="64" stroke-linecap="butt"/></g><g transform="translate(0,0)"><path d="M2150,100 C2600,320 3400,260 3900,90" fill="none" stroke="#fff" stroke-width="64" stroke-linecap="butt"/></g><g transform="translate(2520,0)"><path d="M1480,110 L1070,535 Q1020,560 920,595 Q700,670 620,730 Q540,800 500,1000 L390,1560 L330,1907 Q300,2080 260,2200 L130,2580" fill="none" stroke="#fff" stroke-width="62" stroke-linecap="butt"/></g><g transform="translate(2520,1307)"><path d="M205,1120 L90,1260" fill="none" stroke="#fff" stroke-width="40" stroke-linecap="butt"/></g><g transform="translate(2520,1307)"><path d="M195,1120 L290,1260" fill="none" stroke="#fff" stroke-width="40" stroke-linecap="butt"/></g><g transform="translate(2520,1307)"><path d="M330,610 C800,700 1150,800 1450,960 S2000,1205 2400,1222" fill="none" stroke="#fff" stroke-width="58" stroke-linecap="butt"/></g><g transform="translate(2520,0)"><path d="M2030,110 L2130,255 L2360,180" fill="none" stroke="#fff" stroke-width="50" stroke-linecap="butt"/></g><polyline points="138,1270 680,1180 1530,1400 2840,1897 2923,1507" fill="none" stroke="#fb8505" stroke-width="26" stroke-linejoin="miter" stroke-linecap="round"/><path d="M2924,1512 C2876,1450 2766,1345 2753,1293 A168,168 0 1 1 3079,1293 C3066,1345 2972,1450 2924,1512 Z" fill="#fb8505"/></g></svg>
<div class="b" style="left:283.00px;top:1436.50px;width:2322.00px;height:63.50px;background:#efefef;"></div>
<div class="b" style="left:319.40px;top:1472.40px;width:28.60px;height:28.60px;background:#aaa;border-radius:50%;"></div>
<div class="t" style="left:370.24px;top:1475.91px;font-size:24.41px;font-weight:normal;color:#aaa;-webkit-text-stroke:0.85px #aaa;transform:scaleX(1.0414);">UY5090</div>
<div class="t" style="left:1959.23px;top:1478.12px;font-size:20.00px;font-weight:normal;color:#4bb73a;-webkit-text-stroke:0.70px #4bb73a;transform:scaleX(1.0355);">Cumplimiento</div>
<div class="b" style="left:2131.00px;top:1479.00px;width:350.30px;height:13.50px;background:#d6d6d6;border-radius:6.75px;"></div>
<div class="b" style="left:2131.00px;top:1479.00px;width:278.80px;height:13.50px;background:#4bb73a;border-radius:6.75px 0 0 6.75px;"></div>
<div class="t" style="left:2524.30px;top:1474.19px;font-size:21.77px;font-weight:normal;color:#4bb73a;-webkit-text-stroke:0.76px #4bb73a;transform:scaleX(1.0125);">51%</div>
<div class="b" style="left:0.00px;top:1500.00px;width:2694.00px;height:72.00px;background:#fb8505;"></div>
</div></body></html>
